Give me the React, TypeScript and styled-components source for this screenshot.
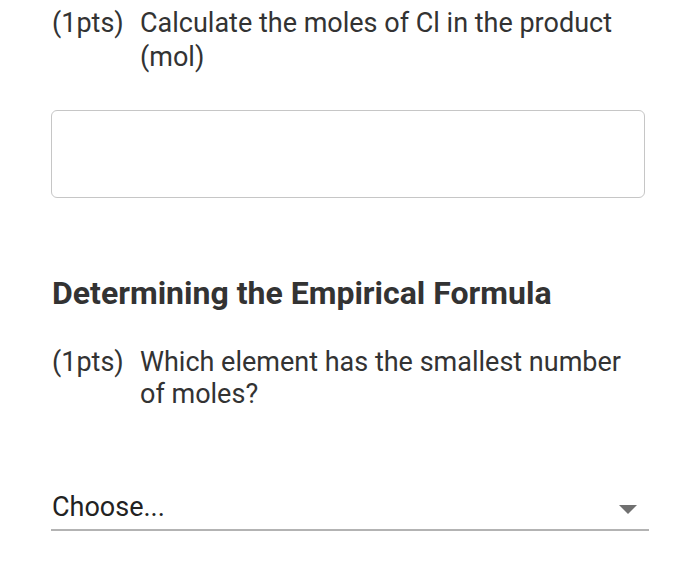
import React from "react";
import styled, { createGlobalStyle } from "styled-components";

const Global = createGlobalStyle`
  html, body { margin: 0; padding: 0; background: #ffffff; }
  body { font-family: Roboto, "Noto Sans", sans-serif; color: #333333; }
`;

const Page = styled.div`
  width: 700px;
  height: 585px;
  box-sizing: border-box;
  padding: 6px 51px 0 52px;
  display: flex;
  flex-direction: column;
`;

const Question = styled.div<{ $mb: number; $lh: number }>`
  display: grid;
  grid-template-columns: 88px 1fr;
  font-size: 27px;
  line-height: ${(p) => p.$lh}px;
  color: #333;
  margin-bottom: ${(p) => p.$mb}px;
`;

const Pts = styled.span``;
const QText = styled.span``;

const TextBox = styled.div`
  height: 86px;
  border: 1.5px solid #c6c6c6;
  border-radius: 6px;
  margin-right: 4px;
  margin-left: -1px;
  margin-bottom: 76px;
`;

const Heading = styled.h2`
  margin: 0 0 34px;
  font-size: 32px;
  line-height: 38px;
  font-weight: 700;
  color: #333;
`;

const Select = styled.div`
  margin-left: -1px;
  display: flex;
  align-items: center;
  justify-content: space-between;
  height: 44px;
  border-bottom: 2px solid #b3b3b3;
  padding: 0 12px 0 1px;
  font-size: 27px;
  color: #222;
`;

const Arrow = styled.span`
  width: 0;
  height: 0;
  border-left: 9px solid transparent;
  border-right: 9px solid transparent;
  border-top: 9px solid #707070;
  margin-top: 4px;
`;

export default function App() {
  return (
    <Page>
      <Global />
      <Question $mb={36} $lh={34}>
        <Pts>(1pts)</Pts>
        <QText>Calculate the moles of Cl in the product (mol)</QText>
      </Question>
      <TextBox />
      <Heading>Determining the Empirical Formula</Heading>
      <Question $mb={75} $lh={32}>
        <Pts>(1pts)</Pts>
        <QText>Which element has the smallest number of moles?</QText>
      </Question>
      <Select>
        <span>Choose...</span>
        <Arrow />
      </Select>
    </Page>
  );
}
